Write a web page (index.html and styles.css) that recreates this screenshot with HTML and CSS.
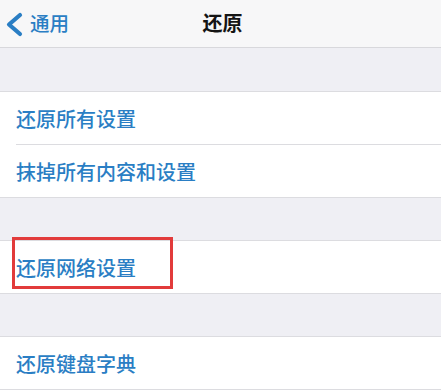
FILE: index.html
```html
<!DOCTYPE html>
<html lang="zh-CN">
<head>
  <meta charset="UTF-8" />
  <meta name="viewport" content="width=device-width, initial-scale=1.0"/>
  <title>还原</title>
  <link rel="stylesheet" href="styles.css">
</head>
<body>
  <div class="navbar">
    <div class="back">
      <svg class="chevron" width="20" height="26" viewBox="0 0 20 26">
        <path d="M16 4 L5 13.5 L16 23" fill="none" stroke="#2a7ec4" stroke-width="4.2" stroke-linecap="round" stroke-linejoin="round"/>
      </svg>
      <span>通用</span>
    </div>
    <h1>还原</h1>
  </div>

  <div class="gap gap-top"></div>
  <div class="group">
    <div class="row">还原所有设置</div>
    <div class="row">抹掉所有内容和设置</div>
  </div>

  <div class="gap"></div>
  <div class="group">
    <div class="row marked">还原网络设置</div>
  </div>

  <div class="gap"></div>
  <div class="group">
    <div class="row">还原键盘字典</div>
  </div>
</body>
</html>
```

FILE: styles.css
```css
body {
  margin: 0;
  background: #efeff4;
  font-family: "Noto Sans CJK SC", "Noto Sans", sans-serif;
  overflow: hidden;
}

.navbar {
  height: 47px;
  background: #f7f7f8;
  border-bottom: 1px solid #d8d8dc;
  display: flex;
  align-items: center;
  justify-content: center;
  position: relative;
}

.navbar h1 {
  margin: 0;
  padding: 0 0 2px 4px;
  font-size: 20px;
  font-weight: bold;
  color: #141414;
  line-height: 1;
}

.back {
  position: absolute;
  left: 4px;
  top: 0;
  height: 47px;
  display: flex;
  align-items: center;
  gap: 6px;
  color: #2a7ec4;
  font-size: 19.5px;
  font-weight: 500;
}

.back span {
  padding-bottom: 2px;
}

.gap {
  height: 42px;
}

.gap-top {
  height: 43px;
}

.group {
  background: #fff;
  border-top: 1px solid #dcdce0;
  border-bottom: 1px solid #dcdce0;
}

.row {
  height: 52px;
  margin-left: 16px;
  display: flex;
  align-items: center;
  font-size: 20px;
  font-weight: 500;
  color: #2a7ec4;
  position: relative;
}

.row + .row {
  border-top: 1px solid #dcdce0;
}

.marked::after {
  content: "";
  position: absolute;
  left: -4px;
  top: -4px;
  width: 155px;
  height: 46px;
  border: 3px solid #e23b3b;
}
```
